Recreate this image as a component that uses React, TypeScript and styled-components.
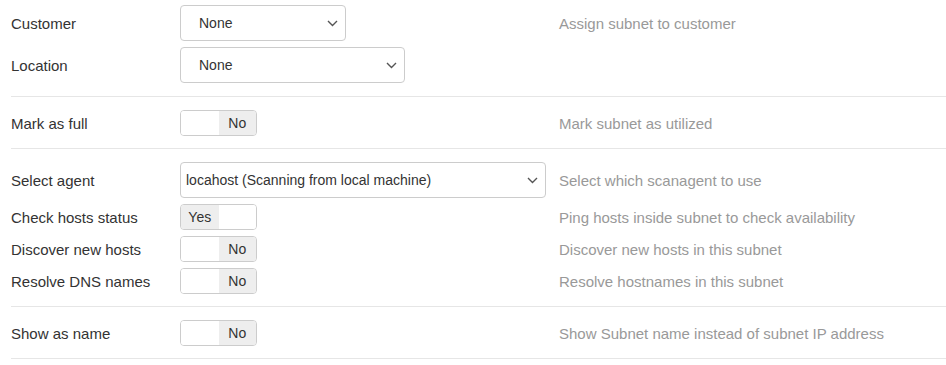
import styled, { createGlobalStyle } from "styled-components";

const GlobalStyle = createGlobalStyle`
  body {
    margin: 0;
    background: white;
    font-family: "Liberation Sans", Arial, sans-serif;
  }
`;

const Form = styled.div`
  margin-left: 11px;
`;

const Group = styled.div<{ $first?: boolean }>`
  border-bottom: 1px solid #e6e6e6;
  padding: ${({ $first }) => ($first ? "2px 0 10px" : "10px 0 9px")};
`;

const Row = styled.div`
  align-items: center;
  display: grid;
  grid-template-columns: 169px 379px 1fr;
  padding: 3px 0;
`;

const Label = styled.div`
  color: #333;
  font-size: 15px;
`;

const Help = styled.div`
  color: #999;
  font-size: 15px;
`;

const SelectBox = styled.div<{ $width: number; $indent: number }>`
  align-items: center;
  border: 1px solid #ccc;
  border-radius: 4px;
  box-sizing: border-box;
  color: #333;
  display: flex;
  font-size: 14px;
  height: 36px;
  justify-content: space-between;
  padding: 0 7px 0 ${({ $indent }) => $indent}px;
  width: ${({ $width }) => $width}px;
`;

const Toggle = styled.div`
  border: 1px solid #ccc;
  border-radius: 4px;
  box-sizing: border-box;
  display: flex;
  height: 26px;
  overflow: hidden;
  width: 77px;
`;

const ToggleHalf = styled.div<{ $active: boolean }>`
  align-items: center;
  background: ${({ $active }) => ($active ? "#eeeeee" : "white")};
  color: #333;
  display: flex;
  flex: 1;
  font-size: 14px;
  justify-content: center;
`;

function Chevron() {
  return (
    <svg width="11" height="7" viewBox="0 0 11 7">
      <path
        d="M1 1l4.5 4.5L10 1"
        fill="none"
        stroke="#555"
        strokeWidth="1.4"
      />
    </svg>
  );
}

interface SelectProps {
  value: string;
  width: number;
  indent: number;
}

function Select({ value, width, indent }: SelectProps) {
  return (
    <SelectBox $width={width} $indent={indent}>
      <span>{value}</span>
      <Chevron />
    </SelectBox>
  );
}

function Switch({ on }: { on: boolean }) {
  return (
    <Toggle>
      <ToggleHalf $active={on}>{on ? "Yes" : ""}</ToggleHalf>
      <ToggleHalf $active={!on}>{on ? "" : "No"}</ToggleHalf>
    </Toggle>
  );
}

export default function App() {
  return (
    <>
      <GlobalStyle />
      <Form>
        <Group $first>
          <Row>
            <Label>Customer</Label>
            <Select value="None" width={166} indent={18} />
            <Help>Assign subnet to customer</Help>
          </Row>
          <Row>
            <Label>Location</Label>
            <Select value="None" width={225} indent={18} />
            <Help />
          </Row>
        </Group>
        <Group>
          <Row>
            <Label>Mark as full</Label>
            <div>
              <Switch on={false} />
            </div>
            <Help>Mark subnet as utilized</Help>
          </Row>
        </Group>
        <Group>
          <Row>
            <Label>Select agent</Label>
            <Select
              value="locahost (Scanning from local machine)"
              width={366}
              indent={5}
            />
            <Help>Select which scanagent to use</Help>
          </Row>
          <Row>
            <Label>Check hosts status</Label>
            <div>
              <Switch on />
            </div>
            <Help>Ping hosts inside subnet to check availability</Help>
          </Row>
          <Row>
            <Label>Discover new hosts</Label>
            <div>
              <Switch on={false} />
            </div>
            <Help>Discover new hosts in this subnet</Help>
          </Row>
          <Row>
            <Label>Resolve DNS names</Label>
            <div>
              <Switch on={false} />
            </div>
            <Help>Resolve hostnames in this subnet</Help>
          </Row>
        </Group>
        <Group>
          <Row>
            <Label>Show as name</Label>
            <div>
              <Switch on={false} />
            </div>
            <Help>Show Subnet name instead of subnet IP address</Help>
          </Row>
        </Group>
      </Form>
    </>
  );
}
